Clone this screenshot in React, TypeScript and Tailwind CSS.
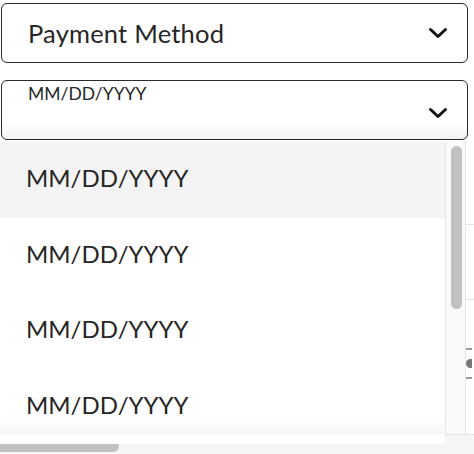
import React from "react";

const Chevron = () => (
  <svg width="20" height="12" viewBox="0 0 20 12" fill="none">
    <path d="M2.5 2.5 L10 9.5 L17.5 2.5" stroke="#111" strokeWidth="3" strokeLinecap="round" strokeLinejoin="round" />
  </svg>
);

const dates = ["MM/DD/YYYY", "MM/DD/YYYY", "MM/DD/YYYY", "MM/DD/YYYY"];

export default function App() {
  return (
    <div
      className="w-[474px] h-[454px] bg-white overflow-hidden flex flex-col text-[#262626]"
      style={{ fontFamily: "Lato, 'Open Sans', sans-serif" }}
    >
      {/* selects */}
      <div className="w-[468px] pl-[1px] pt-[3px] flex flex-col gap-[17px]">
        <div className="h-[60px] border-[1.5px] border-[#2a2a2a] rounded-[6px] flex items-center justify-between pl-[26px] pr-[19px]">
          <span className="text-[25.5px] tracking-[0.2px]">Payment Method</span>
          <Chevron />
        </div>
        <div className="h-[60px] border-[1.5px] border-[#2a2a2a] rounded-[6px] flex justify-between pl-[26px] pr-[19px] bg-gradient-to-b from-white from-70% to-[#f3f3f3]">
          <span className="text-[17.5px] leading-none pt-[4px]">MM/DD/YYYY</span>
          <div className="self-center pt-[6px]">
            <Chevron />
          </div>
        </div>
      </div>

      {/* dropdown list */}
      <div className="flex h-[293px] mt-[1px]">
        <div className="w-[446px] pt-[1px] border-r border-[#e6e6e6] relative">
          {dates.map((d, i) => (
            <div
              key={i}
              className={
                "h-[75.5px] flex items-center pl-[26px] pb-[3px] text-[24px] " +
                (i === 0 ? "bg-[#f4f4f4]" : "bg-white")
              }
            >
              {d}
            </div>
          ))}
          <div className="absolute left-0 right-0 bottom-0 h-[14px] bg-gradient-to-b from-transparent to-[#f6f6f6]" />
        </div>
        <div className="w-[20px] bg-[#fafafa] border-r border-[#e6e6e6] pt-[5px] pl-[5px]">
          <div className="w-[11px] h-[163px] rounded-full bg-[#c1c1c1]" />
        </div>
        <div className="flex-1 flex flex-col">
          <div className="h-[84px] border-b border-[#e4e4e4]" />
          <div className="h-[75px] border-b border-[#e4e4e4]" />
          <div className="flex flex-col pt-[48px] gap-[9px]">
            <div className="w-[6px] h-[2px] bg-[#9a9a9a]" />
            <div className="w-[6px] h-[9px] rounded-l-full bg-[#777]" />
            <div className="w-[6px] h-[2px] bg-[#9a9a9a]" />
          </div>
        </div>
      </div>

      {/* horizontal scrollbar */}
      <div className="flex-1 bg-[#f6f6f6] border-t border-[#e2e2e2] pt-[5px]">
        <div className="w-[119px] h-[12px] rounded-r-full bg-[#c1c1c1]" />
      </div>
    </div>
  );
}
